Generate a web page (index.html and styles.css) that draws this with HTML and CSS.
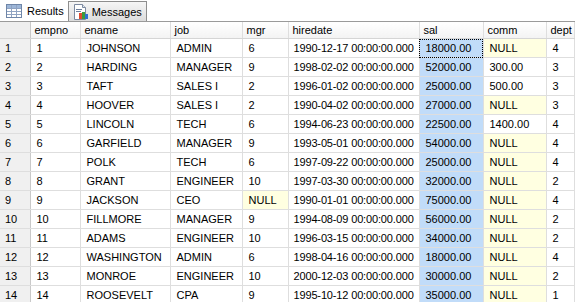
FILE: index.html
```html
<!DOCTYPE html>
<html lang="en">
<head>
  <meta charset="UTF-8">
  <title>Results</title>
  <link rel="stylesheet" href="styles.css">
</head>
<body>
  <div class="tabs">
    <div class="tab active">
      <svg class="tab-icon" width="16" height="14" viewBox="0 0 16 14">
        <rect x="0.5" y="0.5" width="15" height="13" fill="#fff" stroke="#6f86a8"/>
        <rect x="1" y="1" width="14" height="3" fill="#9db6d8"/>
        <path d="M1 4.5h14M1 7.5h14M1 10.5h14M5.5 1v12M10.5 1v12" stroke="#8fa3c2" fill="none"/>
      </svg>
      <span>Results</span>
    </div>
    <div class="tab">
      <svg class="tab-icon" width="15" height="16" viewBox="0 0 15 16">
        <path d="M1.5 0.5h8l3 3v12h-11z" fill="#fff" stroke="#7d8aa0"/>
        <path d="M9.5 0.5v3h3" fill="#dfe6f0" stroke="#7d8aa0"/>
        <rect x="3" y="5" width="6" height="1" fill="#6e7f9c"/>
        <rect x="3" y="7" width="5" height="1" fill="#6e7f9c"/>
        <rect x="6" y="9" width="3" height="6" fill="#e04a2e"/>
        <rect x="9" y="8" width="3" height="7" fill="#3c9a3c"/>
        <rect x="12" y="10" width="3" height="5" fill="#2f6fd0"/>
      </svg>
      <span>Messages</span>
    </div>
  </div>

  <table class="grid">
    <colgroup>
      <col class="c-num">
      <col class="c-empno">
      <col class="c-ename">
      <col class="c-job">
      <col class="c-mgr">
      <col class="c-hire">
      <col class="c-sal">
      <col class="c-comm">
      <col>
    </colgroup>
    <thead>
      <tr>
        <th class="num"></th>
        <th>empno</th>
        <th>ename</th>
        <th>job</th>
        <th>mgr</th>
        <th>hiredate</th>
        <th>sal</th>
        <th>comm</th>
        <th>dept</th>
      </tr>
    </thead>
    <tbody>
      <tr><td class="num">1</td><td>1</td><td>JOHNSON</td><td>ADMIN</td><td>6</td><td class="date">1990-12-17 00:00:00.000</td><td class="sel focus">18000.00</td><td class="null">NULL</td><td>4</td></tr>
      <tr><td class="num">2</td><td>2</td><td>HARDING</td><td>MANAGER</td><td>9</td><td class="date">1998-02-02 00:00:00.000</td><td class="sel">52000.00</td><td>300.00</td><td>3</td></tr>
      <tr><td class="num">3</td><td>3</td><td>TAFT</td><td>SALES I</td><td>2</td><td class="date">1996-01-02 00:00:00.000</td><td class="sel">25000.00</td><td>500.00</td><td>3</td></tr>
      <tr><td class="num">4</td><td>4</td><td>HOOVER</td><td>SALES I</td><td>2</td><td class="date">1990-04-02 00:00:00.000</td><td class="sel">27000.00</td><td class="null">NULL</td><td>3</td></tr>
      <tr><td class="num">5</td><td>5</td><td>LINCOLN</td><td>TECH</td><td>6</td><td class="date">1994-06-23 00:00:00.000</td><td class="sel">22500.00</td><td>1400.00</td><td>4</td></tr>
      <tr><td class="num">6</td><td>6</td><td>GARFIELD</td><td>MANAGER</td><td>9</td><td class="date">1993-05-01 00:00:00.000</td><td class="sel">54000.00</td><td class="null">NULL</td><td>4</td></tr>
      <tr><td class="num">7</td><td>7</td><td>POLK</td><td>TECH</td><td>6</td><td class="date">1997-09-22 00:00:00.000</td><td class="sel">25000.00</td><td class="null">NULL</td><td>4</td></tr>
      <tr><td class="num">8</td><td>8</td><td>GRANT</td><td>ENGINEER</td><td>10</td><td class="date">1997-03-30 00:00:00.000</td><td class="sel">32000.00</td><td class="null">NULL</td><td>2</td></tr>
      <tr><td class="num">9</td><td>9</td><td>JACKSON</td><td>CEO</td><td class="null">NULL</td><td class="date">1990-01-01 00:00:00.000</td><td class="sel">75000.00</td><td class="null">NULL</td><td>4</td></tr>
      <tr><td class="num">10</td><td>10</td><td>FILLMORE</td><td>MANAGER</td><td>9</td><td class="date">1994-08-09 00:00:00.000</td><td class="sel">56000.00</td><td class="null">NULL</td><td>2</td></tr>
      <tr><td class="num">11</td><td>11</td><td>ADAMS</td><td>ENGINEER</td><td>10</td><td class="date">1996-03-15 00:00:00.000</td><td class="sel">34000.00</td><td class="null">NULL</td><td>2</td></tr>
      <tr><td class="num">12</td><td>12</td><td>WASHINGTON</td><td>ADMIN</td><td>6</td><td class="date">1998-04-16 00:00:00.000</td><td class="sel">18000.00</td><td class="null">NULL</td><td>4</td></tr>
      <tr><td class="num">13</td><td>13</td><td>MONROE</td><td>ENGINEER</td><td>10</td><td class="date">2000-12-03 00:00:00.000</td><td class="sel">30000.00</td><td class="null">NULL</td><td>2</td></tr>
      <tr><td class="num">14</td><td>14</td><td>ROOSEVELT</td><td>CPA</td><td>9</td><td class="date">1995-10-12 00:00:00.000</td><td class="sel">35000.00</td><td class="null">NULL</td><td>1</td></tr>
    </tbody>
  </table>
</body>
</html>
```

FILE: styles.css
```css
body {
  margin: 0;
  font-family: 'Liberation Sans', Arial, sans-serif;
  font-size: 11px;
  color: #000;
  background-color: #ffffff;
  overflow: hidden;
}
.tabs {
  display: flex;
  align-items: flex-end;
  height: 22px;
  border-bottom: 1px solid #9a9a9a;
  box-sizing: border-box;
}
.tab {
  display: flex;
  align-items: center;
  gap: 4px;
  height: 19px;
  padding: 0 4px 0 4px;
  margin-left: 1px;
  background: linear-gradient(#f6f6f6, #dcdcdc);
  border: 1px solid #8e8e8e;
  border-bottom: none;
}
.tab.active {
  gap: 5px;
  height: 21px;
  margin-left: 0;
  padding: 0 2px 0 5px;
  background: #ffffff;
  border-color: transparent;
}
.tab-icon {
  display: block;
}
.grid {
  border-collapse: collapse;
  table-layout: fixed;
  width: 100%;
}
.c-num { width: 30px; }
.c-empno { width: 50px; }
.c-ename { width: 90px; }
.c-job { width: 72px; }
.c-mgr { width: 46px; }
.c-hire { width: 131px; }
.c-sal { width: 64px; }
.c-comm { width: 63px; }
th, td {
  text-align: left;
  white-space: nowrap;
  overflow: hidden;
  border-right: 1px solid #dedede;
  border-bottom: 1px solid #dedede;
}
th {
  height: 16px;
  padding: 0 0 0 4px;
  font-weight: normal;
  line-height: 16px;
  background: linear-gradient(#ffffff, #f3f3f3);
  border-bottom-color: #d5d5d5;
}
td {
  height: 18px;
  padding: 0 0 0 6px;
  line-height: 18px;
}
.num {
  padding-left: 5px;
  background: #f0f0f0;
  border-right-color: #c9c9c9;
}
th.num {
  background: #eeeeee;
}
.date {
  padding-left: 5px;
  letter-spacing: -0.15px;
}
.sel {
  background: #c1dcf9;
}
.focus {
  outline: 1px dotted #000;
  outline-offset: -1px;
}
.null {
  background: #ffffe1;
}
```
